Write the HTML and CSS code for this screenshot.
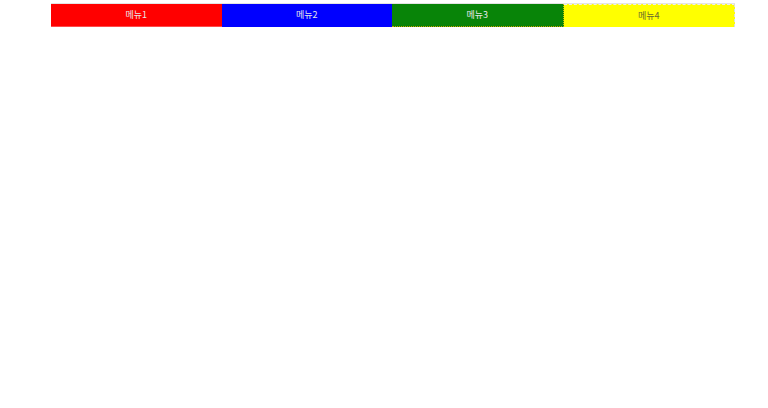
FILE: index.html
```html
<!DOCTYPE html>
<html lang="ko">
<head>
<meta charset="utf-8">
<title>메뉴</title>
<link rel="stylesheet" href="styles.css">
</head>
<body>
<nav class="nav">
  <ul class="menu">
    <li class="item item-red">메뉴1</li>
    <li class="item item-blue">메뉴2</li>
    <li class="item item-green">메뉴3</li>
    <li class="item item-yellow">메뉴4</li>
  </ul>
</nav>
</body>
</html>
```

FILE: styles.css
```css
html, body {
  margin: 0;
  padding: 0;
  background: #ffffff;
}

.nav {
  padding: 3px 0 0 51px;
}

.menu {
  list-style: none;
  margin: 0;
  padding: 0;
  width: 684px;
  display: flex;
  border-top: 1px solid #e4e4e4;
}

.item {
  flex: 1;
  height: 23px;
  line-height: 22px;
  text-align: center;
  font-family: "Noto Sans CJK KR", "DejaVu Sans", sans-serif;
  font-size: 9px;
  color: #e8e8e8;
  box-sizing: border-box;
}

.item-red {
  background: #ff0000;
  border-bottom: 1px solid #ff4a4a;
}

.item-blue {
  background: #0000ff;
}

.item-green {
  background: #088408;
  border-bottom: 1px dotted #c8a000;
  border-right: 1px dotted #c8c000;
}

.item-yellow {
  background: #ffff00;
  color: #6a6a30;
  border-top: 1px dashed #eeeeee;
  border-right: 1px dashed #dddddd;
}
```
